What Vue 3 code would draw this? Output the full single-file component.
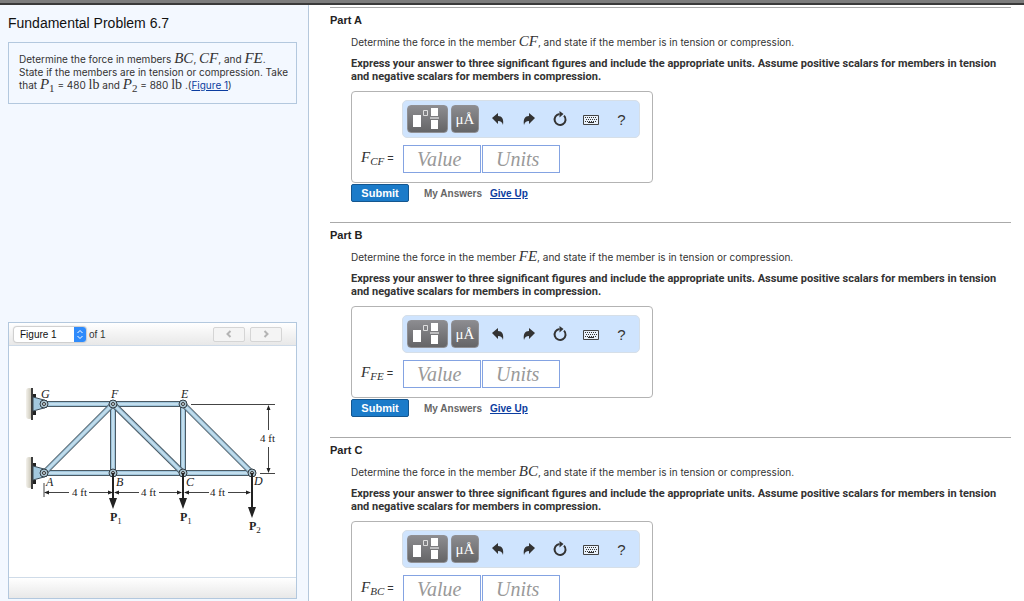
<template>
  <div class="page">
    <div class="topbar"></div>
    <div class="columns">
      <aside class="sidebar">
        <h1 class="title">Fundamental Problem 6.7</h1>
        <div class="problem">
          Determine the force in members <i class="math">BC</i>, <i class="math">CF</i>, and <i class="math">FE</i>.
          State if the members are in tension or compression. Take
          that <i class="math">P<sub>1</sub></i> = 480 <span class="unit">lb</span> and
          <i class="math">P<sub>2</sub></i> = 880 <span class="unit">lb</span> .(<a href="#figure">Figure 1</a>)
        </div>

        <section id="figure" class="figure">
          <header class="figure-head">
            <div class="picker">
              <select id="figure-select" v-model="figure">
                <option value="1">Figure 1</option>
              </select>
              <svg class="picker-arrows" viewBox="0 0 12 14" aria-hidden="true">
                <path d="M3.5 5.5 6 3l2.500 2.500M3.500 8.500 6 11l2.500-2.500" />
              </svg>
            </div>
            <label for="figure-select">of 1</label>
            <div class="pager">
              <button type="button" disabled aria-label="Previous figure">
                <svg viewBox="0 0 8 8"><path d="M5.500 1 2.500 4l3 3" /></svg>
              </button>
              <button type="button" disabled aria-label="Next figure">
                <svg viewBox="0 0 8 8"><path d="M2.500 1l3 3-3 3" /></svg>
              </button>
            </div>
          </header>

          <svg class="truss" viewBox="9 346 287 231">
            <defs>
              <linearGradient id="wall" x1="0" x2="1">
                <stop offset="0" stop-color="#f4f2ec" />
                <stop offset="1" stop-color="#c4c0b0" />
              </linearGradient>
            </defs>

            <g v-for="y in [404, 473]" :key="y">
              <rect x="26" :y="y - 16" width="6" height="31" rx="3" fill="url(#wall)" />
              <rect x="31" :y="y - 16" width="2" height="32" fill="#3c3c3c" />
              <rect x="33" :y="y - 10" width="3" height="4" fill="#222" />
              <rect x="33" :y="y + 7" width="3" height="4" fill="#222" />
              <path
                :d="`M33 ${y - 7}l11 3a4 4 0 0 1 0 8l-11 3z`"
                fill="#a3c9df"
                stroke="#3b4c57"
              />
            </g>

            <g v-for="(m, i) in members" :key="i">
              <line class="bar-edge" :x1="m[0]" :y1="m[1]" :x2="m[2]" :y2="m[3]" />
              <line class="bar-fill" :x1="m[0]" :y1="m[1]" :x2="m[2]" :y2="m[3]" />
              <line class="bar-shine" :x1="m[0]" :y1="m[1]" :x2="m[2]" :y2="m[3]" />
            </g>

            <g v-for="j in joints" :key="j.name">
              <circle :cx="j.x" :cy="j.y" r="4" fill="#a9c3d0" stroke="#333d44" />
              <circle :cx="j.x" :cy="j.y" r="1.500" fill="#dfe8ec" stroke="#333" />
              <text class="joint" :x="j.tx" :y="j.ty">{{ j.name }}</text>
            </g>

            <g class="dim">
              <path d="M44 483v14M191 404.500h84M260 473.500h15" />
              <path d="M45 492.500h24M89 492.500h23M115 492.500h24M159 492.500h22M185 492.500h24M228 492.500h22" />
              <path d="M268.500 406v24M268.500 447v25" />
            </g>
            <path
              class="tips"
              d="M44 492.500l5-2v4zM113 492.500l-5-2v4zM114 492.500l5-2v4zM182 492.500l-5-2v4zM184 492.500l5-2v4zM251 492.500l-5-2v4zM268.500 405l-2 5h4zM268.500 473l-2-5h4z"
            />
            <text class="size" x="72" y="496">4 ft</text>
            <text class="size" x="141" y="496">4 ft</text>
            <text class="size" x="210" y="496">4 ft</text>
            <text class="size" x="260" y="442">4 ft</text>

            <g v-for="l in loads" :key="l.x">
              <path class="load" :d="`M${l.x} 473V${l.tip - 8}`" />
              <path class="tips" :d="`M${l.x} ${l.tip}l-4-11h8z`" />
              <text class="force" :x="l.x - 3" :y="l.ty">P<tspan class="index" dy="3">{{ l.index }}</tspan></text>
            </g>
          </svg>

          <footer class="figure-foot"></footer>
        </section>
      </aside>

      <main class="parts">
        <section v-for="part in parts" :key="part.id" class="part">
          <h2>Part {{ part.id }}</h2>
          <div class="part-body">
            <p>
              Determine the force in the member <i class="math">{{ part.member }}</i>, and state if the member is in
              tension or compression.
            </p>
            <p class="hint">
              Express your answer to three significant figures and include the appropriate units. Assume positive
              scalars for members in tension and negative scalars for members in compression.
            </p>

            <div class="answer">
              <div class="tools">
                <button type="button" class="dark wide" aria-label="Templates">
                  <svg viewBox="0 0 39 26">
                    <path fill="#fff" d="M5 9h8v12H5zM23 2h7v8h-7zM23 14h7v9h-7zM22 11.500h9v1h-9z" />
                    <path fill="none" stroke="#ddd" d="M15.500 4.500h4v5h-4z" />
                  </svg>
                </button>
                <button type="button" class="dark">μÅ</button>
                <button type="button" class="tool" aria-label="Undo">
                  <svg viewBox="0 0 16 16">
                    <path d="M2 7l6-5v3c4 0 6 3 5 9-1-3-2-4-5-4v3z" />
                  </svg>
                </button>
                <button type="button" class="tool" aria-label="Redo">
                  <svg viewBox="0 0 16 16">
                    <path d="M14 7 8 2v3c-4 0-6 3-5 9 1-3 2-4 5-4v3z" />
                  </svg>
                </button>
                <button type="button" class="tool" aria-label="Reset">
                  <svg viewBox="0 0 16 16">
                    <path fill="none" stroke="#333" stroke-width="2" d="M12 4.600A5.500 5.500 0 1 1 7.500 3" />
                    <path d="M7.500 0l4 3-4 3.500z" />
                  </svg>
                </button>
                <button type="button" class="tool" aria-label="Keyboard">
                  <svg viewBox="0 0 16 16">
                    <path fill="#e9f1fa" stroke="#444" d="M.500 4.500h15v9H.500z" />
                    <path
                      fill="none"
                      stroke="#333"
                      stroke-dasharray="1 1"
                      d="M2 6.500h12M3 8.500h11M2 10.500h12"
                    />
                    <path fill="none" stroke="#333" d="M5 11.500h6" />
                  </svg>
                </button>
                <button type="button" class="tool help" aria-label="Help">?</button>
              </div>
              <div class="entry">
                <label :for="'value-' + part.id"><i>F<sub>{{ part.member }}</sub></i> =</label>
                <input :id="'value-' + part.id" v-model="part.value" type="text" placeholder="Value" />
                <input v-model="part.units" type="text" placeholder="Units" aria-label="Units" />
              </div>
            </div>

            <div class="actions">
              <button type="button" class="submit">Submit</button>
              <span>My Answers</span>
              <a href="#">Give Up</a>
            </div>
          </div>
        </section>
      </main>
    </div>
  </div>
</template>

<script setup>
import { ref, reactive } from "vue";

const figure = ref("1");

const parts = reactive([
  { id: "A", member: "CF", value: "", units: "" },
  { id: "B", member: "FE", value: "", units: "" },
  { id: "C", member: "BC", value: "", units: "" }
]);

const joints = [
  { name: "G", x: 44, y: 404, tx: 41, ty: 398 },
  { name: "F", x: 113, y: 404, tx: 111, ty: 398 },
  { name: "E", x: 183, y: 404, tx: 181, ty: 398 },
  { name: "A", x: 44, y: 473, tx: 46, ty: 486 },
  { name: "B", x: 113, y: 473, tx: 116, ty: 486 },
  { name: "C", x: 183, y: 473, tx: 186, ty: 486 },
  { name: "D", x: 252, y: 473, tx: 254, ty: 485 }
];

// x1, y1, x2, y2
const members = [
  [46, 404, 183, 404],
  [46, 473, 252, 473],
  [113, 404, 113, 473],
  [183, 404, 183, 473],
  [45, 472, 113, 404],
  [113, 404, 183, 473],
  [183, 404, 252, 473]
];

const loads = [
  { x: 113, tip: 509, ty: 521, index: 1 },
  { x: 183, tip: 509, ty: 521, index: 1 },
  { x: 252, tip: 518, ty: 530, index: 2 }
];
</script>

<style>
body {
  overflow: hidden;
}
</style>

<style scoped>
.page {
  display: flex;
  flex-direction: column;
  height: 100vh;
  overflow: hidden;
  background: #fff;
  color: #333;
  font: 11px/13px "Liberation Sans", Arial, sans-serif;
}

.page * {
  box-sizing: border-box;
}

.topbar {
  flex: none;
  height: 5px;
  background: #7d7d7d;
  border-bottom: 2px solid #3a3a3a;
}

.columns {
  display: flex;
  flex: 1;
  min-height: 0;
}

a {
  color: #0b3da0;
}

button {
  padding: 0;
  font-family: inherit;
  cursor: pointer;
}

.math {
  font: italic 15px/1px "Liberation Serif", serif;
}

.math sub,
.entry sub {
  font-size: 11px;
  line-height: 1px;
  vertical-align: -3px;
}

.math sub {
  font-style: normal;
}

.unit {
  font: 14px/1px "Liberation Serif", serif;
}

/* sidebar */
.sidebar {
  display: flex;
  flex-direction: column;
  flex: none;
  width: 309px;
  padding: 9px 11px 2px 8px;
  background: #f3f8ff;
  border-right: 1px solid #b5c8dc;
}

.title {
  margin: 0 0 9px;
  color: #111;
  font-size: 14px;
  font-weight: normal;
  line-height: 19px;
}

.problem,
.part p {
  font-family: Inter, Arial, sans-serif;
  font-size: 10px;
}

.problem {
  padding: 10px 4px 11px 10px;
  border: 1px solid #b3c8de;
}

.figure {
  margin-top: auto;
  background: #fff;
  border: 1px solid #b3c8de;
}

.figure-head {
  display: flex;
  align-items: center;
  height: 23px;
  padding: 0 14px 0 5px;
  background: linear-gradient(#fff, #e8e8e8);
  border-bottom: 1px solid #cfdbe8;
}

.picker {
  display: flex;
  width: 72px;
  height: 15px;
  margin-right: 3px;
  overflow: hidden;
  background: #fff;
  border-radius: 3px;
  box-shadow: 0 0 1px 1px #ccc;
}

.picker select {
  flex: 1;
  min-width: 0;
  padding: 0 0 0 6px;
  appearance: none;
  background: none;
  border: 0;
  color: #111;
  font: 10px/15px "Liberation Sans", Arial, sans-serif;
}

.picker-arrows {
  width: 12px;
  height: 15px;
  background: #2f8bfb;
  fill: none;
  stroke: #fff;
}

.figure-head label {
  font-size: 10px;
}

.pager {
  display: flex;
  gap: 5px;
  margin-left: auto;
}

.pager button {
  display: flex;
  align-items: center;
  justify-content: center;
  width: 32px;
  height: 15px;
  background: #f4f4f4;
  border: 1px solid #d5d5d5;
  border-radius: 2px;
}

.pager svg {
  width: 8px;
  height: 8px;
  fill: none;
  stroke: #b4b4b4;
  stroke-width: 2;
}

.figure-foot {
  height: 21px;
  background: linear-gradient(#fff, #e8e8e8);
  border-top: 1px solid #cfdbe8;
}

/* truss drawing */
.truss {
  display: block;
  width: 100%;
  font-family: "Liberation Serif", serif;
  fill: #222;
}

.bar-edge {
  stroke: #4a5a64;
  stroke-width: 6;
}

.bar-fill {
  stroke: #9fc5dc;
  stroke-width: 4;
}

.bar-shine {
  stroke: #c3deed;
  stroke-width: 2;
}

.joint {
  font-size: 12px;
  font-style: italic;
}

.size {
  font-size: 11px;
}

.force {
  font-size: 12px;
  font-weight: bold;
}

.index {
  font-size: 9px;
  font-weight: normal;
}

.dim path {
  fill: none;
  stroke: #444;
  stroke-width: 1;
}

.tips {
  fill: #222;
}

.load {
  stroke: #222;
  stroke-width: 2;
}

/* parts */
.parts {
  flex: 1;
  min-width: 0;
  padding: 2px 13px 0 21px;
}

.part {
  height: 215px;
  border-top: 1px solid #aaa;
}

.part h2 {
  margin: 0;
  padding: 6px 0 9px;
  color: #222;
  font-size: 11px;
  line-height: 13px;
}

.part-body {
  padding-left: 21px;
}

.part p {
  margin: 0 0 8px;
}

.part .hint {
  font-family: Roboto, Arial, sans-serif;
  font-size: 11px;
  font-weight: bold;
}

.answer {
  width: 302px;
  height: 92px;
  padding: 8px 12px 8px 9px;
  border: 1px solid #b3b3b3;
  border-radius: 4px;
}

.tools {
  display: flex;
  align-items: center;
  height: 38px;
  margin-left: 41px;
  padding: 0 2px 0 4px;
  background: #cfe4fe;
  border: 1px solid #d6dfe8;
  border-radius: 5px;
}

.dark {
  flex: none;
  width: 28px;
  height: 28px;
  margin-right: 3px;
  background: linear-gradient(#8c8c90, #656567);
  border: 1px solid #909094;
  border-radius: 4px;
  color: #fff;
  font: 15px/24px "Liberation Serif", serif;
}

.wide {
  width: 41px;
}

.wide svg {
  display: block;
  width: 100%;
  height: 100%;
}

.tool {
  display: flex;
  flex: 1;
  align-items: center;
  justify-content: center;
  height: 28px;
  background: none;
  border: 0;
  color: #333;
}

.tool svg {
  width: 16px;
  height: 16px;
  fill: #333;
}

.help {
  font-size: 15px;
}

.entry {
  display: flex;
  align-items: center;
  gap: 1px;
  margin-top: 7px;
}

.entry label {
  width: 41px;
  padding-bottom: 3px;
}

.entry i {
  font: italic 15px/15px "Liberation Serif", serif;
}

.entry input {
  width: 78px;
  height: 28px;
  padding: 0 13px;
  background: #fff;
  border: 1px solid #84a3e2;
  outline: 0;
  font: italic 20px/24px "Liberation Serif", serif;
}

.entry input::placeholder {
  color: #999;
  opacity: 1;
}

.actions {
  display: flex;
  align-items: center;
  margin-top: 1px;
  font-size: 10px;
  font-weight: bold;
}

.actions span {
  margin: 0 8px 0 15px;
  color: #666;
}

.submit {
  width: 58px;
  height: 18px;
  background: #1b7bc9;
  border: 1px solid #14568f;
  border-radius: 2px;
  color: #fff;
  font-size: 11px;
  font-weight: bold;
}
</style>
